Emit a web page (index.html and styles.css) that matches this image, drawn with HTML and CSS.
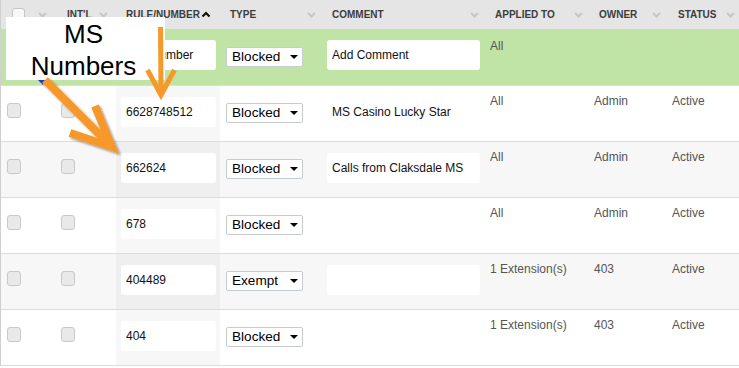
FILE: index.html
```html
<!DOCTYPE html>
<html>
<head>
<meta charset="utf-8">
<title>Rules</title>
<link rel="stylesheet" href="styles.css">
</head>
<body>
<div class="page">
  <table class="grid">
    <colgroup>
      <col class="c-chk"><col class="c-intl"><col class="c-rule"><col class="c-type">
      <col class="c-comment"><col class="c-applied"><col class="c-owner"><col class="c-status">
    </colgroup>
    <thead>
      <tr>
        <th class="th-chk"><div class="th-in"><span class="hbox"></span><svg class="chev" width="9" height="6" viewBox="0 0 9 6"><polyline points="1,1 4.5,4.5 8,1"/></svg></div></th>
        <th class="th-intl"><div class="th-in"><span>INT'L</span><svg class="chev" width="9" height="6" viewBox="0 0 9 6"><polyline points="1,1 4.5,4.5 8,1"/></svg></div></th>
        <th class="sorted"><div class="th-in th-left"><span>RULE/NUMBER</span><svg class="caret" width="10" height="7" viewBox="0 0 10 7"><polyline points="1.5,5.5 5,2 8.5,5.5"/></svg></div></th>
        <th><div class="th-in"><span>TYPE</span><svg class="chev" width="9" height="6" viewBox="0 0 9 6"><polyline points="1,1 4.5,4.5 8,1"/></svg></div></th>
        <th><div class="th-in"><span>COMMENT</span><svg class="chev" width="9" height="6" viewBox="0 0 9 6"><polyline points="1,1 4.5,4.5 8,1"/></svg></div></th>
        <th><div class="th-in"><span>APPLIED TO</span><svg class="chev" width="9" height="6" viewBox="0 0 9 6"><polyline points="1,1 4.5,4.5 8,1"/></svg></div></th>
        <th><div class="th-in"><span>OWNER</span><svg class="chev" width="9" height="6" viewBox="0 0 9 6"><polyline points="1,1 4.5,4.5 8,1"/></svg></div></th>
        <th class="th-status"><div class="th-in"><span>STATUS</span><svg class="chev" width="9" height="6" viewBox="0 0 9 6"><polyline points="1,1 4.5,4.5 8,1"/></svg></div></th>
      </tr>
    </thead>
    <tbody>
      <tr class="new">
        <td class="chk"></td>
        <td class="chk"></td>
        <td class="inp"><input class="field num" type="text" value="Add Number"></td>
        <td class="selc"><div class="sel"><span>Blocked</span><i class="tri"></i></div></td>
        <td class="inp"><input class="field cmt" type="text" value="Add Comment"></td>
        <td class="txt">All</td>
        <td class="txt"></td>
        <td class="txt"></td>
      </tr>
      <tr>
        <td class="chk"><span class="box"></span></td>
        <td class="chk"><span class="box"></span></td>
        <td class="inp sortcol"><input class="field num" type="text" value="6628748512"></td>
        <td class="selc"><div class="sel"><span>Blocked</span><i class="tri"></i></div></td>
        <td class="inp"><input class="field cmt" type="text" value="MS Casino Lucky Star"></td>
        <td class="txt">All</td>
        <td class="txt">Admin</td>
        <td class="txt">Active</td>
      </tr>
      <tr class="alt">
        <td class="chk"><span class="box"></span></td>
        <td class="chk"><span class="box"></span></td>
        <td class="inp sortcol"><input class="field num" type="text" value="662624"></td>
        <td class="selc"><div class="sel"><span>Blocked</span><i class="tri"></i></div></td>
        <td class="inp"><input class="field cmt" type="text" value="Calls from Claksdale MS"></td>
        <td class="txt">All</td>
        <td class="txt">Admin</td>
        <td class="txt">Active</td>
      </tr>
      <tr>
        <td class="chk"><span class="box"></span></td>
        <td class="chk"><span class="box"></span></td>
        <td class="inp sortcol"><input class="field num" type="text" value="678"></td>
        <td class="selc"><div class="sel"><span>Blocked</span><i class="tri"></i></div></td>
        <td class="inp"><input class="field cmt" type="text" value=""></td>
        <td class="txt">All</td>
        <td class="txt">Admin</td>
        <td class="txt">Active</td>
      </tr>
      <tr class="alt">
        <td class="chk"><span class="box"></span></td>
        <td class="chk"><span class="box"></span></td>
        <td class="inp sortcol"><input class="field num" type="text" value="404489"></td>
        <td class="selc"><div class="sel"><span>Exempt</span><i class="tri"></i></div></td>
        <td class="inp"><input class="field cmt" type="text" value=""></td>
        <td class="txt">1 Extension(s)</td>
        <td class="txt">403</td>
        <td class="txt">Active</td>
      </tr>
      <tr>
        <td class="chk"><span class="box"></span></td>
        <td class="chk"><span class="box"></span></td>
        <td class="inp sortcol"><input class="field num" type="text" value="404"></td>
        <td class="selc"><div class="sel"><span>Blocked</span><i class="tri"></i></div></td>
        <td class="inp"><input class="field cmt" type="text" value=""></td>
        <td class="txt">1 Extension(s)</td>
        <td class="txt">403</td>
        <td class="txt">Active</td>
      </tr>
    </tbody>
  </table>

  <div class="callout">MS<br>Numbers</div>

  <svg class="arrows" width="739" height="368" viewBox="0 0 739 368">
    <defs>
      <filter id="sh" x="-20%" y="-20%" width="150%" height="150%">
        <feDropShadow dx="1.5" dy="1.5" stdDeviation="1.2" flood-color="#000" flood-opacity="0.45"/>
      </filter>
    </defs>
    <polygon class="blue" points="38,80 45,80 43,85"/>
    <g class="arrow" filter="url(#sh)">
      <line x1="45" y1="80" x2="110" y2="145" stroke-width="8"/>
      <polyline points="95,106 112,147 70,133" stroke-width="8"/>
    </g>
    <g class="arrow">
      <line x1="160.5" y1="27" x2="161" y2="92" stroke-width="5"/>
      <polyline points="147.5,70 161,95 174.5,70" stroke-width="5"/>
    </g>
  </svg>
</div>
</body>
</html>
```

FILE: styles.css
```css
* { box-sizing: border-box; }
html, body { margin: 0; padding: 0; background: #fff; }
body {
  font-family: "Liberation Sans", Arial, sans-serif;
  font-size: 12px;
  color: #555;
}
.page {
  position: relative;
  width: 739px;
  height: 368px;
  overflow: hidden;
}
.grid {
  width: 739px;
  table-layout: fixed;
  border-collapse: separate;
  border-spacing: 0;
  border-left: 1px solid #cfcfcf;
}
.c-chk { width: 54px; }
.c-intl { width: 61px; }
.c-rule { width: 104px; }
.c-type { width: 102px; }
.c-comment { width: 163px; }
.c-applied { width: 104px; }
.c-owner { width: 78px; }
.c-status { width: 72px; }

th {
  height: 30px;
  background: #e5e5e5;
  border-bottom: 1px solid #d3d3d3;
  padding: 0 6px 0 10px;
  font-size: 10px;
  font-weight: bold;
  color: #3c3c3c;
  text-align: left;
  vertical-align: middle;
  white-space: nowrap;
}
.th-in {
  display: flex;
  align-items: center;
  justify-content: space-between;
}
.th-left { justify-content: flex-start; gap: 1px; }
.th-chk { padding-left: 11px; padding-right: 8px; }
.th-intl { padding-left: 12px; padding-right: 8px; }
.th-status { padding-left: 11px; padding-right: 4px; }
.chev polyline { fill: none; stroke: #c6c6c6; stroke-width: 2; }
.caret polyline { fill: none; stroke: #111; stroke-width: 2.2; }
.hbox {
  display: block;
  width: 13px;
  height: 14px;
  border: 1px solid #c4c4c4;
  border-radius: 3px;
  background: #f7f7f7;
}

td {
  height: 56px;
  border-bottom: 1px solid #dcdcdc;
  padding: 0 5px;
  vertical-align: top;
  background: #fff;
}
tr.alt td { background: #f7f7f7; }
td.sortcol { background: #f7f7f7; }
tr.alt td.sortcol { background: #efefef; }
tr.new td { background: #c0e4a6; }

td.txt { padding-top: 8px; line-height: 14px; color: #555; }
td.inp { padding-top: 11px; }
td.selc { padding-top: 17px; padding-left: 6px; }
td.chk { padding-top: 17px; padding-left: 6px; }
tr.new td.inp { padding-top: 10px; }
tr.new td.txt { padding-top: 9px; }

.box {
  display: block;
  width: 14px;
  height: 15px;
  border: 1px solid #c9c9c9;
  border-radius: 3px;
  background: #e9e9e9;
}
.field {
  display: block;
  height: 30px;
  border: 0;
  border-radius: 3px;
  background: #fff;
  padding: 0 5px;
  margin: 0;
  font-family: "Liberation Sans", Arial, sans-serif;
  font-size: 12px;
  color: #111;
  outline: none;
}
.field.num { width: 95px; }
.field.cmt { width: 153px; }

.sel {
  display: flex;
  align-items: center;
  justify-content: space-between;
  width: 77px;
  height: 20px;
  border: 1px solid #c7ccd2;
  border-radius: 2px;
  background: #fff;
  padding: 0 4px 0 5px;
  font-size: 13.6px;
  color: #000;
  line-height: 18px;
}
.tri {
  display: block;
  width: 0;
  height: 0;
  border-left: 4px solid transparent;
  border-right: 4px solid transparent;
  border-top: 4px solid #000;
}

.callout {
  position: absolute;
  left: 6px;
  top: 17px;
  width: 159px;
  height: 63px;
  background: #fff;
  padding: 1px 4px 0 0;
  text-align: center;
  font-size: 26px;
  line-height: 32px;
  color: #000;
}
.arrows {
  position: absolute;
  left: 0;
  top: 0;
  pointer-events: none;
}
.arrow line, .arrow polyline {
  fill: none;
  stroke: #f7982a;
  stroke-linecap: butt;
  stroke-linejoin: miter;
  stroke-miterlimit: 6;
}
.blue { fill: #2838c8; }
```
